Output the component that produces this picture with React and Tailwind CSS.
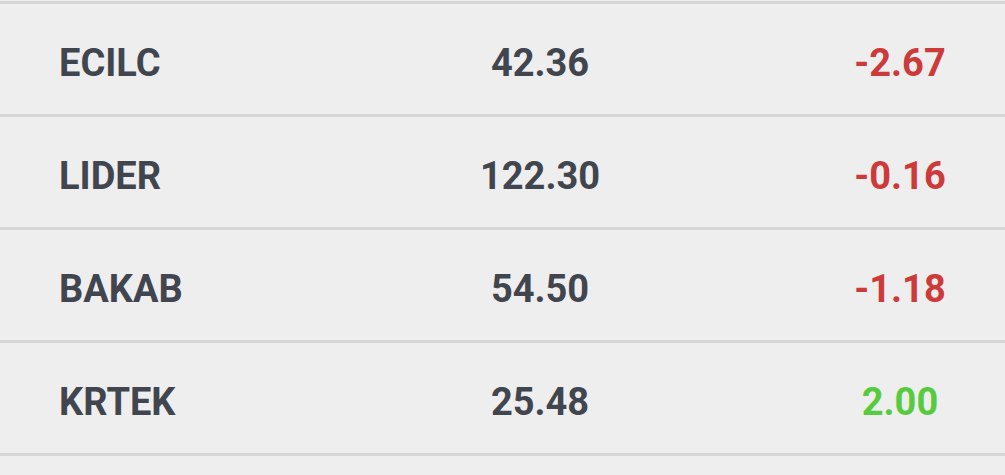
import React from 'react';

const rows = [
  { symbol: 'ECILC', price: '42.36', change: '-2.67' },
  { symbol: 'LIDER', price: '122.30', change: '-0.16' },
  { symbol: 'BAKAB', price: '54.50', change: '-1.18' },
  { symbol: 'KRTEK', price: '25.48', change: '2.00' },
];

const App = () => {
  return (
    <div className="w-[1005px] h-[475px] bg-[#eeeeee] pt-[1px] overflow-hidden font-['Roboto',sans-serif]">
      <div className="border-t-[3px] border-[#d6d6d6]">
        {rows.map((row) => {
          const negative = row.change.startsWith('-');
          return (
            <div
              key={row.symbol}
              className="flex items-center h-[113px] pt-2 border-b-[3px] border-[#d6d6d6] text-[38px] leading-none font-bold"
            >
              <div className="w-[420px] pl-[59px] text-[#40454e]">{row.symbol}</div>
              <div className="w-[240px] text-center text-[#40454e]">{row.price}</div>
              <div className="w-[140px]" />
              <div className={`w-[200px] text-center ${negative ? 'text-[#cd3a3a]' : 'text-[#57cb3e]'}`}>
                {row.change}
              </div>
            </div>
          );
        })}
      </div>
    </div>
  );
};

export default App;
